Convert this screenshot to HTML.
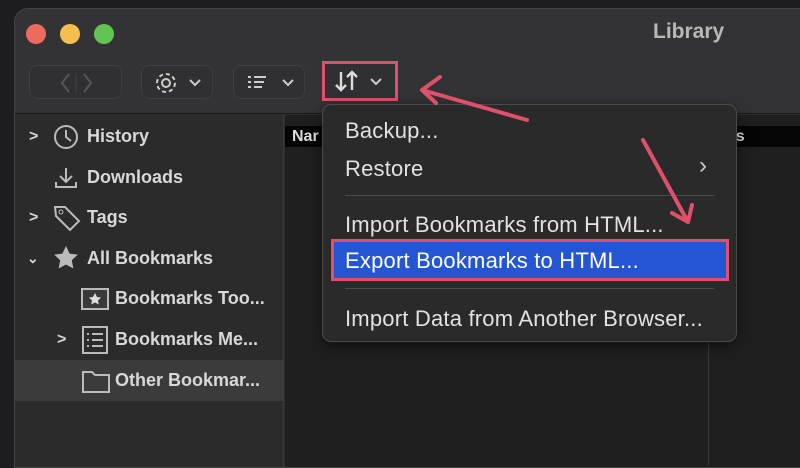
<!DOCTYPE html>
<html><head><style>
*{margin:0;padding:0;box-sizing:border-box}
html,body{width:800px;height:450px}
body{background:#1d1d1f;overflow:hidden;position:relative;font-family:"Liberation Sans",sans-serif;color:#dcdcdc}
.win{position:absolute;left:14px;top:8px;width:800px;height:460px;background:#2c2c2c;border-radius:14px 0 0 0;border:1px solid #444;overflow:hidden}
.tb{position:absolute;left:0;top:0;right:0;height:105px;background:#333335;border-bottom:1px solid #1a1a1a}
.dot{position:absolute;top:15px;width:20px;height:20px;border-radius:50%}
.title{position:absolute;left:638px;top:11px;font-size:21px;font-weight:bold;color:#b8b8b8}
.btn{position:absolute;top:56px;height:34px;border:1px solid #3e3e3e;border-radius:8px;background:#303032}
.side{position:absolute;left:0;top:106px;width:269px;bottom:0;background:#2b2b2b;border-right:1px solid #3a3a3a}
.row{position:absolute;left:0;width:269px;height:41px;font-size:18px;font-weight:bold;color:#d8d8d8;line-height:41px}
.row span{position:absolute}
.main{position:absolute;left:270px;top:106px;right:0;bottom:0;background:#1f1f1f}
.hdr{position:absolute;left:270px;top:117px;right:0;height:21px;background:#050505;font-size:16px;font-weight:bold;color:#ddd;line-height:21px}
.menu{position:absolute;left:322px;top:104px;width:415px;height:238px;background:#2a2a2a;border:1px solid #4a4a4a;border-radius:9px;box-shadow:0 4px 14px rgba(0,0,0,.5)}
.mi{position:absolute;left:22px;font-size:22px;letter-spacing:0.2px;color:#e2e2e2;white-space:nowrap}
.sep{position:absolute;left:22px;right:22px;height:1px;background:#4c4c4c}
.red{border:3px solid #e0506a}
</style></head><body>
<div class="win">
 <div class="tb">
  <div class="dot" style="left:11px;background:#ed6a5e"></div>
  <div class="dot" style="left:45px;background:#f4bf4f"></div>
  <div class="dot" style="left:79px;background:#61c554"></div>
  <div class="title">Library</div>
  <div class="btn" style="left:14px;width:93px">
   <svg width="93" height="34"><path d="M39 8 L32 17 L39 26" stroke="#555" stroke-width="2" fill="none"/><path d="M46 9V25" stroke="#444" stroke-width="1"/><path d="M54 8 L61 17 L54 26" stroke="#555" stroke-width="2" fill="none"/></svg>
  </div>
  <div class="btn" style="left:126px;width:72px">
   <svg width="72" height="34"><circle cx="24" cy="17" r="4" stroke="#ccc" stroke-width="2" fill="none"/><circle cx="24" cy="17" r="9" stroke="#ccc" stroke-width="2" fill="none" stroke-dasharray="4 3"/><path d="M48 14 L53 19 L58 14" stroke="#ccc" stroke-width="2" fill="none"/></svg>
  </div>
  <div class="btn" style="left:218px;width:72px">
   <svg width="72" height="34"><path d="M14 11h3M20 11h12M14 16h3M20 16h10M14 21h3M20 21h8" stroke="#ccc" stroke-width="2"/><path d="M49 14 L54 19 L59 14" stroke="#ccc" stroke-width="2" fill="none"/></svg>
  </div>
  <div class="red" style="position:absolute;left:307px;top:52px;width:76px;height:40px;background:#303032">
   <svg width="70" height="34"><path d="M16 8v18M11 21l5 5 5-5M27 26V8M22 13l5-5 5 5" stroke="#ddd" stroke-width="2.4" fill="none"/><path d="M46 15 L51 20 L56 15" stroke="#ccc" stroke-width="2" fill="none"/></svg>
  </div>
 </div>
 <div class="side">
  <div class="row" style="top:1px"><span style="left:14px;font-size:16px">&gt;</span><svg style="position:absolute;left:38px;top:8px" width="26" height="26"><circle cx="13" cy="13" r="11" stroke="#bbb" stroke-width="2" fill="none"/><path d="M13 6v7l5 4" stroke="#bbb" stroke-width="2" fill="none"/></svg><span style="left:72px">History</span></div>
  <div class="row" style="top:42px"><svg style="position:absolute;left:38px;top:8px" width="26" height="26"><path d="M13 3v14M7 11l6 6 6-6M3 17v5h20v-5" stroke="#bbb" stroke-width="2" fill="none"/></svg><span style="left:72px">Downloads</span></div>
  <div class="row" style="top:82px"><span style="left:14px;font-size:16px">&gt;</span><svg style="position:absolute;left:37px;top:6px" width="30" height="30"><path d="M3 4h10l14 14-9 9L4 13z" stroke="#bbb" stroke-width="2" fill="none"/><circle cx="9" cy="9" r="2" stroke="#bbb" fill="none"/></svg><span style="left:72px">Tags</span></div>
  <div class="row" style="top:123px"><span style="left:12px;font-size:14px">&#8964;</span><svg style="position:absolute;left:37px;top:6px" width="28" height="28"><path d="M14 2l3.6 7.6 8.2 1-6 5.7 1.6 8.2L14 20.5 6.6 24.5l1.6-8.2-6-5.7 8.2-1z" fill="#bbb"/></svg><span style="left:72px">All Bookmarks</span></div>
  <div class="row" style="top:163px"><svg style="position:absolute;left:66px;top:10px" width="28" height="22"><rect x="1" y="1" width="26" height="20" stroke="#bbb" stroke-width="2" fill="#3a3a3a"/><path d="M14 5l2 4 4 .5-3 3 .8 4L14 14.5 10.2 16.5l.8-4-3-3 4-.5z" fill="#ddd"/></svg><span style="left:100px">Bookmarks Too...</span></div>
  <div class="row" style="top:204px"><span style="left:42px;font-size:16px">&gt;</span><svg style="position:absolute;left:67px;top:7px" width="26" height="28"><rect x="1" y="1" width="24" height="26" stroke="#bbb" stroke-width="2" fill="none"/><path d="M5 8h2M10 8h11M5 14h2M10 14h11M5 20h2M10 20h11" stroke="#bbb" stroke-width="2"/></svg><span style="left:100px">Bookmarks Me...</span></div>
  <div class="row" style="top:245px;background:#3b3b3b"><svg style="position:absolute;left:67px;top:9px" width="28" height="24"><path d="M1 3h9l3 3h14v17H1z" stroke="#bbb" stroke-width="2" fill="none"/></svg><span style="left:100px">Other Bookmar...</span></div>
 </div>
 <div class="main"><div style="position:absolute;left:423px;top:30px;width:1px;height:320px;background:#3a3a3a"></div></div>
 <div class="hdr"><span style="position:absolute;left:7px">Nar</span><span style="position:absolute;left:441px">gs</span></div>
</div>
<div class="menu">
 <div class="mi" style="top:13px">Backup...</div>
 <div class="mi" style="top:51px">Restore</div>
 <div class="mi" style="top:47px;left:376px;font-size:24px;color:#ccc">&#8250;</div>
 <div class="sep" style="top:90px"></div>
 <div class="mi" style="top:107px">Import Bookmarks from HTML...</div>
 <div class="red" style="position:absolute;left:8px;top:134px;width:398px;height:42px;background:#2456d3"></div>
 <div class="mi" style="top:143px;color:#fff">Export Bookmarks to HTML...</div>
 <div class="sep" style="top:183px"></div>
 <div class="mi" style="top:201px">Import Data from Another Browser...</div>
</div>
<svg style="position:absolute;left:0;top:0" width="800" height="450">
 <path d="M527 120 L422 90 M422 90 L440 77 M422 90 L436 103" stroke="#e0506a" stroke-width="4" fill="none" stroke-linecap="round"/>
 <path d="M643 140 L688 222 M688 222 L672 213 M688 222 L692 205" stroke="#e0506a" stroke-width="4" fill="none" stroke-linecap="round"/>
</svg>
</body></html>
